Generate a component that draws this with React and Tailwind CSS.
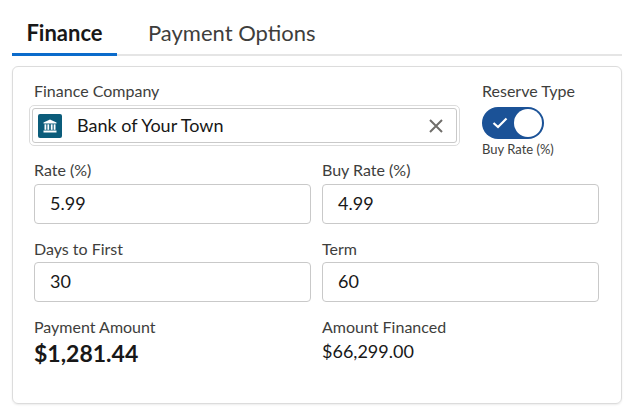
export default function App() {
  const input = "h-[40px] rounded-[4px] border border-[#c9c9c9] bg-white px-[15px] flex items-center text-[18px] text-[#181818]";
  return (
    <div className="w-[628px] h-[408px] bg-white text-[#181818]" style={{ fontFamily: "Lato, 'Open Sans', sans-serif" }}>
      <div className="pt-[12px] pl-[12px] pr-[6px]">
        <div className="flex border-b-2 border-[#e5e5e5] h-[44px]">
          <div className="w-[105px] flex items-start justify-center pt-[4px] border-b-[3px] border-[#0b6bcb] -mb-[2px] text-[22px] font-bold">Finance</div>
          <div className="pl-[31px] pt-[4px] text-[22px] text-[#3e3e3c]">Payment Options</div>
        </div>
      </div>
      <div className="mx-[12px] mt-[10px] mr-[6px] h-[338px] rounded-[6px] border border-[#dcdcdc] shadow-[0_1px_2px_rgba(0,0,0,0.08)] px-[16px] pt-[13px]">
        <div className="flex">
          <div className="w-[431px]">
            <div className="pl-[5px] text-[16px] text-[#3e3e3c] leading-[22px]">Finance Company</div>
            <div className="mt-[3px] h-[41px] rounded-[5px] border border-[#dcdcdc] p-[2px]">
              <div className="h-full rounded-[3px] border border-[#c9c9c9] flex items-center pl-[5px] pr-[12px]">
                <div className="w-[24px] h-[24px] rounded-[2px] bg-[#0b5c7a] flex items-center justify-center">
                  <svg width="14" height="14" viewBox="0 0 14 14" fill="white">
                    <path d="M7 0.5 L13.5 3.5 V4.5 H0.5 V3.5 Z" />
                    <rect x="1.5" y="5.3" width="1.8" height="5.5" />
                    <rect x="4.4" y="5.3" width="1.8" height="5.5" />
                    <rect x="7.8" y="5.3" width="1.8" height="5.5" />
                    <rect x="10.7" y="5.3" width="1.8" height="5.5" />
                    <rect x="0.5" y="11.5" width="13" height="2" />
                  </svg>
                </div>
                <div className="ml-[15px] text-[18px] flex-1">Bank of Your Town</div>
                <svg width="16" height="16" viewBox="0 0 16 16" stroke="#706e6b" strokeWidth="2">
                  <path d="M2 2 L14 14 M14 2 L2 14" />
                </svg>
              </div>
            </div>
          </div>
          <div className="ml-[22px]">
            <div className="text-[16px] text-[#3e3e3c] leading-[22px]">Reserve Type</div>
            <div className="mt-[5px] w-[62px] h-[32px] rounded-full bg-[#1b5297] flex items-center justify-between pl-[10px] pr-[2px]">
              <svg width="16" height="12" viewBox="0 0 16 12" fill="none" stroke="white" strokeWidth="2.2"><path d="M1.5 6 L6 10 L14.5 1.5" /></svg>
              <div className="w-[28px] h-[28px] rounded-full bg-white"></div>
            </div>
            <div className="mt-[1px] text-[13px] text-[#3e3e3c]">Buy Rate (%)</div>
          </div>
        </div>
        <div className="-mt-[1px] grid grid-cols-2 gap-x-[11px] pl-[5px] pr-[6px]">
          <div>
            <div className="text-[16px] text-[#3e3e3c] leading-[22px]">Rate (%)</div>
            <div className={"mt-[3px] " + input}>5.99</div>
          </div>
          <div>
            <div className="text-[16px] text-[#3e3e3c] leading-[22px]">Buy Rate (%)</div>
            <div className={"mt-[3px] " + input}>4.99</div>
          </div>
          <div className="mt-[14px]">
            <div className="text-[16px] text-[#3e3e3c] leading-[22px]">Days to First</div>
            <div className={"mt-[2px] " + input}>30</div>
          </div>
          <div className="mt-[14px]">
            <div className="text-[16px] text-[#3e3e3c] leading-[22px]">Term</div>
            <div className={"mt-[2px] " + input}>60</div>
          </div>
          <div className="mt-[14px]">
            <div className="text-[16px] text-[#3e3e3c] leading-[22px]">Payment Amount</div>
            <div className="text-[23px] font-bold leading-[30px]">$1,281.44</div>
          </div>
          <div className="mt-[14px]">
            <div className="text-[16px] text-[#3e3e3c] leading-[22px]">Amount Financed</div>
            <div className="text-[18px] leading-[26px]">$66,299.00</div>
          </div>
        </div>
      </div>
    </div>
  );
}
